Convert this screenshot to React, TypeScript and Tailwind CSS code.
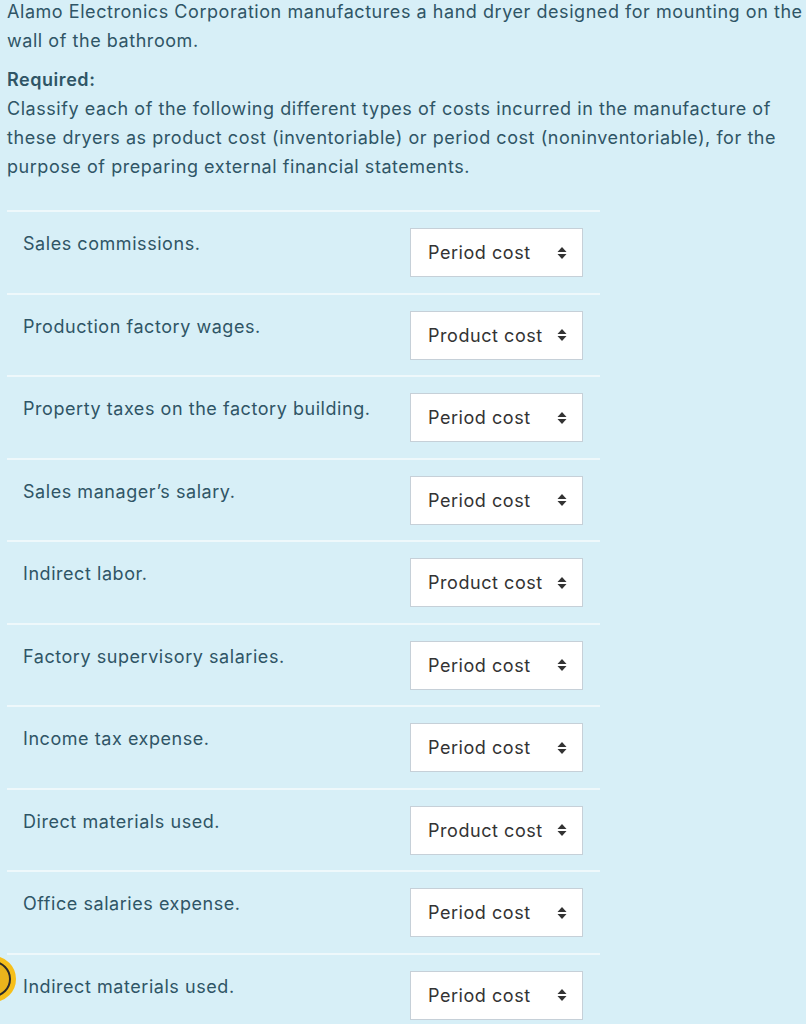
import React from 'react';

const rows: { label: string; value: string }[] = [
  { label: 'Sales commissions.', value: 'Period cost' },
  { label: 'Production factory wages.', value: 'Product cost' },
  { label: 'Property taxes on the factory building.', value: 'Period cost' },
  { label: 'Sales manager\u2019s salary.', value: 'Period cost' },
  { label: 'Indirect labor.', value: 'Product cost' },
  { label: 'Factory supervisory salaries.', value: 'Period cost' },
  { label: 'Income tax expense.', value: 'Period cost' },
  { label: 'Direct materials used.', value: 'Product cost' },
  { label: 'Office salaries expense.', value: 'Period cost' },
  { label: 'Indirect materials used.', value: 'Period cost' },
];

const Arrows = () => (
  <svg width="10" height="14" viewBox="0 0 10 14" className="shrink-0">
    <path d="M5 1 L9.5 6 H0.5 Z" fill="#333" />
    <path d="M5 13 L9.5 8 H0.5 Z" fill="#333" />
  </svg>
);

export default function App() {
  return (
    <div className="relative h-[1024px] w-[806px] overflow-hidden bg-[#d7eff7] font-['Inter',sans-serif] text-[18px] leading-[29px] tracking-[0.55px] text-[#2f5566]">
      <div className="whitespace-nowrap pl-[7px]">
        <p className="-mt-[3px]">Alamo Electronics Corporation manufactures a hand dryer designed for mounting on the</p>
        <p>wall of the bathroom.</p>
        <p className="mt-[10px] font-semibold">Required:</p>
        <p>Classify each of the following different types of costs incurred in the manufacture of</p>
        <p>these dryers as product cost (inventoriable) or period cost (noninventoriable), for the</p>
        <p>purpose of preparing external financial statements.</p>
      </div>

      <div className="ml-[7px] mt-[29px] w-[593px]">
        {rows.map((r) => (
          <div key={r.label} className="flex h-[82.5px] items-start justify-between border-t-2 border-[#eef8fb] pl-[16px] pr-[17px]">
            <span className="mt-[17px]">{r.label}</span>
            <div className="mt-[16px] flex h-[49px] w-[173px] items-center justify-between border border-[#c6d0d8] bg-white pl-[17px] pr-[15px] text-[#333]">
              <span>{r.value}</span>
              <Arrows />
            </div>
          </div>
        ))}
      </div>

      <div className="absolute left-[-30px] top-[956px] h-[46px] w-[46px] rounded-full border-[5px] border-[#f6bf1a] bg-[#f6bf1a]">
        <div className="h-full w-full rounded-full border-2 border-[#2a2a2a] bg-[#e9b41c]" />
      </div>
    </div>
  );
}
